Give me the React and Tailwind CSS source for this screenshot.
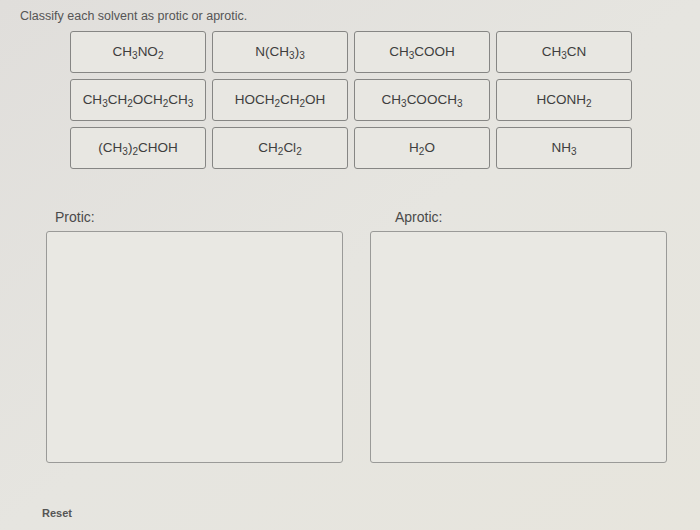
const solvents = [
  [['CH', '3', 'NO', '2'], ['N(CH', '3', ')', '3'], ['CH', '3', 'COOH'], ['CH', '3', 'CN']],
  [['CH', '3', 'CH', '2', 'OCH', '2', 'CH', '3'], ['HOCH', '2', 'CH', '2', 'OH'], ['CH', '3', 'COOCH', '3'], ['HCONH', '2']],
  [['(CH', '3', ')', '2', 'CHOH'], ['CH', '2', 'Cl', '2'], ['H', '2', 'O'], ['NH', '3']],
];

// odd indexes are subscripts
function Formula({ parts }) {
  return (
    <span>
      {parts.map((p, i) =>
        i % 2 === 1 ? (
          <sub key={i} className="text-[10px] bottom-[-0.3em]">{p}</sub>
        ) : (
          <span key={i}>{p}</span>
        )
      )}
    </span>
  );
}

function DropZone({ label, labelClass }) {
  return (
    <div className="flex flex-col">
      <div className={`text-[14px] text-[#4a4a4a] h-[24px] ${labelClass}`}>{label}</div>
      <div className="w-[297px] h-[232px] border border-[#9a9a98] rounded-[3px] bg-[#e9e8e3]" />
    </div>
  );
}

export default function App() {
  return (
    <div
      className="w-[700px] h-[530px] bg-gradient-to-br from-[#e0dedb] via-[#e6e5e0] to-[#e7e5dd] overflow-hidden flex flex-col"
      style={{ fontFamily: '"Liberation Sans", Arial, sans-serif' }}
    >
      <div className="pl-[20px] pt-[9px] text-[12.5px] text-[#555] leading-[14px]">
        Classify each solvent as protic or aprotic.
      </div>

      <div className="ml-[70px] mt-[8px] grid grid-cols-[repeat(4,136px)] gap-x-[6px] gap-y-[6px]">
        {solvents.flat().map((f, i) => (
          <div
            key={i}
            className="h-[42px] border border-[#868684] rounded-[3px] bg-[#e8e7e2] flex items-center justify-center text-[13.5px] text-[#3e3e3e]"
          >
            <Formula parts={f} />
          </div>
        ))}
      </div>

      <div className="flex mt-[38px] pl-[46px] gap-[27px]">
        <DropZone label="Protic:" labelClass="pl-[9px]" />
        <DropZone label="Aprotic:" labelClass="pl-[25px]" />
      </div>

      <div className="pl-[42px] mt-[42px] text-[11px] font-bold text-[#555]">Reset</div>
    </div>
  );
}
